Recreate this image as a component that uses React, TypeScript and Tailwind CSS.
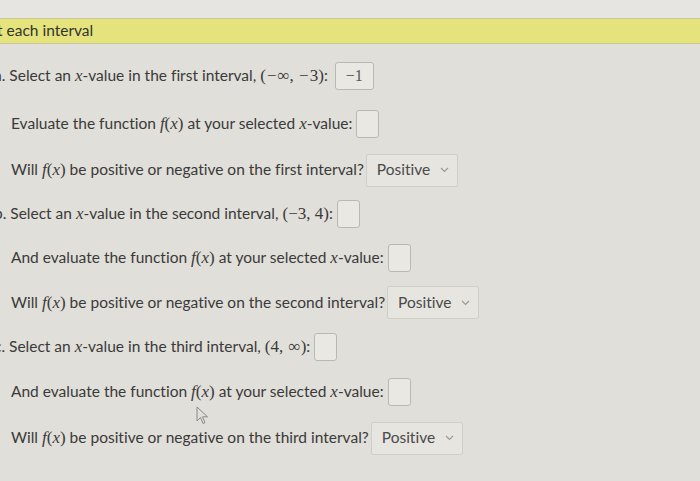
import React from "react";

const sans = "font-['Lato',sans-serif] [font-variant-ligatures:none]";
const mathCls = "font-['Liberation_Serif',serif] text-[17px]";

function X() {
    return <i className={mathCls}>x</i>;
}

function Fx() {
    return (
        <span className={mathCls}>
            <i>f</i>(<i>x</i>)
        </span>
    );
}

function Minus({ tight }: { tight?: boolean }) {
    return <span className={tight ? "" : "mx-[1px]"}>−</span>;
}

function Box({ value }: { value?: string }) {
    return (
        <span
            className={`inline-flex items-center justify-center h-[28px] ${value ? "w-[39px] ml-[7px]" : "w-[23px] ml-[4px]"} border border-[#b9b8b3] rounded-[3px] bg-[#e9e8e3] text-[16px] text-[#555] font-['Liberation_Serif',serif]`}
        >
            {value}
        </span>
    );
}

function Pick() {
    return (
        <span className="inline-flex items-center justify-between w-[92px] h-[33px] ml-[2px] pl-[10px] pr-[8px] border border-[#cfcec8] rounded-[2px] bg-[#e6e5e0] text-[15.5px] text-[#4a4a4a]">
            Positive
            <svg width="9" height="6" viewBox="0 0 9 6" fill="none" stroke="#9a9a9a" strokeWidth="1.2">
                <path d="M1 1 L4.5 4.5 L8 1" />
            </svg>
        </span>
    );
}

export default function App() {
    return (
        <div className={`w-[700px] h-[481px] overflow-hidden bg-[#e1dfd9] text-[#3a3a3a] ${sans} relative`}>
            <div className="h-[18px] bg-[#e6e5e1]" />
            <div className="h-[26px] bg-[#e5e47c] border-y border-[#c9c79c] flex items-center text-[15.5px] text-[#333] -ml-[3px]">
                t each interval
            </div>

            <div className="text-[15.5px]">
                <div className="h-[56px] pt-[8px] flex items-center -ml-[6px]">
                    <span>a. Select an&nbsp;</span>
                    <X />
                    <span>-value in the first interval,&nbsp;</span>
                    <span className={mathCls}>
                        (<Minus />∞, <Minus />3)
                    </span>
                    <span>:</span>
                    <Box value="−1" />
                </div>
                <div className="h-[48px] flex items-center pl-[11px]">
                    <span>Evaluate the function&nbsp;</span>
                    <Fx />
                    <span>&nbsp;at your selected&nbsp;</span>
                    <X />
                    <span>-value:</span>
                    <Box />
                </div>
                <div className="h-[44px] flex items-center pl-[11px]">
                    <span>Will&nbsp;</span>
                    <Fx />
                    <span>&nbsp;be positive or negative on the first interval?</span>
                    <Pick />
                </div>
                <div className="h-[44px] flex items-center -ml-[6px]">
                    <span>b. Select an&nbsp;</span>
                    <X />
                    <span>-value in the second interval,&nbsp;</span>
                    <span className={mathCls}>
                        (<Minus tight />3, 4)
                    </span>
                    <span>:</span>
                    <Box />
                </div>
                <div className="h-[44px] flex items-center pl-[11px]">
                    <span>And evaluate the function&nbsp;</span>
                    <Fx />
                    <span>&nbsp;at your selected&nbsp;</span>
                    <X />
                    <span>-value:</span>
                    <Box />
                </div>
                <div className="h-[45px] flex items-center pl-[11px]">
                    <span>Will&nbsp;</span>
                    <Fx />
                    <span>&nbsp;be positive or negative on the second interval?</span>
                    <Pick />
                </div>
                <div className="h-[44px] flex items-center -ml-[6px]">
                    <span>c. Select an&nbsp;</span>
                    <X />
                    <span>-value in the third interval,&nbsp;</span>
                    <span className={mathCls}>
                        (4,&nbsp;<span className="ml-[1px]">∞</span>)
                    </span>
                    <span>:</span>
                    <Box />
                </div>
                <div className="h-[45px] flex items-center pl-[11px]">
                    <span>And evaluate the function&nbsp;</span>
                    <Fx />
                    <span>&nbsp;at your selected&nbsp;</span>
                    <X />
                    <span>-value:</span>
                    <Box />
                </div>
                <div className="h-[48px] flex items-center pl-[11px]">
                    <span>Will&nbsp;</span>
                    <Fx />
                    <span>&nbsp;be positive or negative on the third interval?</span>
                    <Pick />
                </div>
            </div>

            {/* mouse cursor */}
            <svg className="absolute left-[196px] top-[406px]" width="14" height="20" viewBox="0 0 14 20" fill="none" stroke="#8a8a8a" strokeWidth="1">
                <path d="M1 1 L1 15 L4.5 11.5 L7 17.5 L9 16.5 L6.5 10.8 L11.5 10.8 Z" />
            </svg>
        </div>
    );
}
